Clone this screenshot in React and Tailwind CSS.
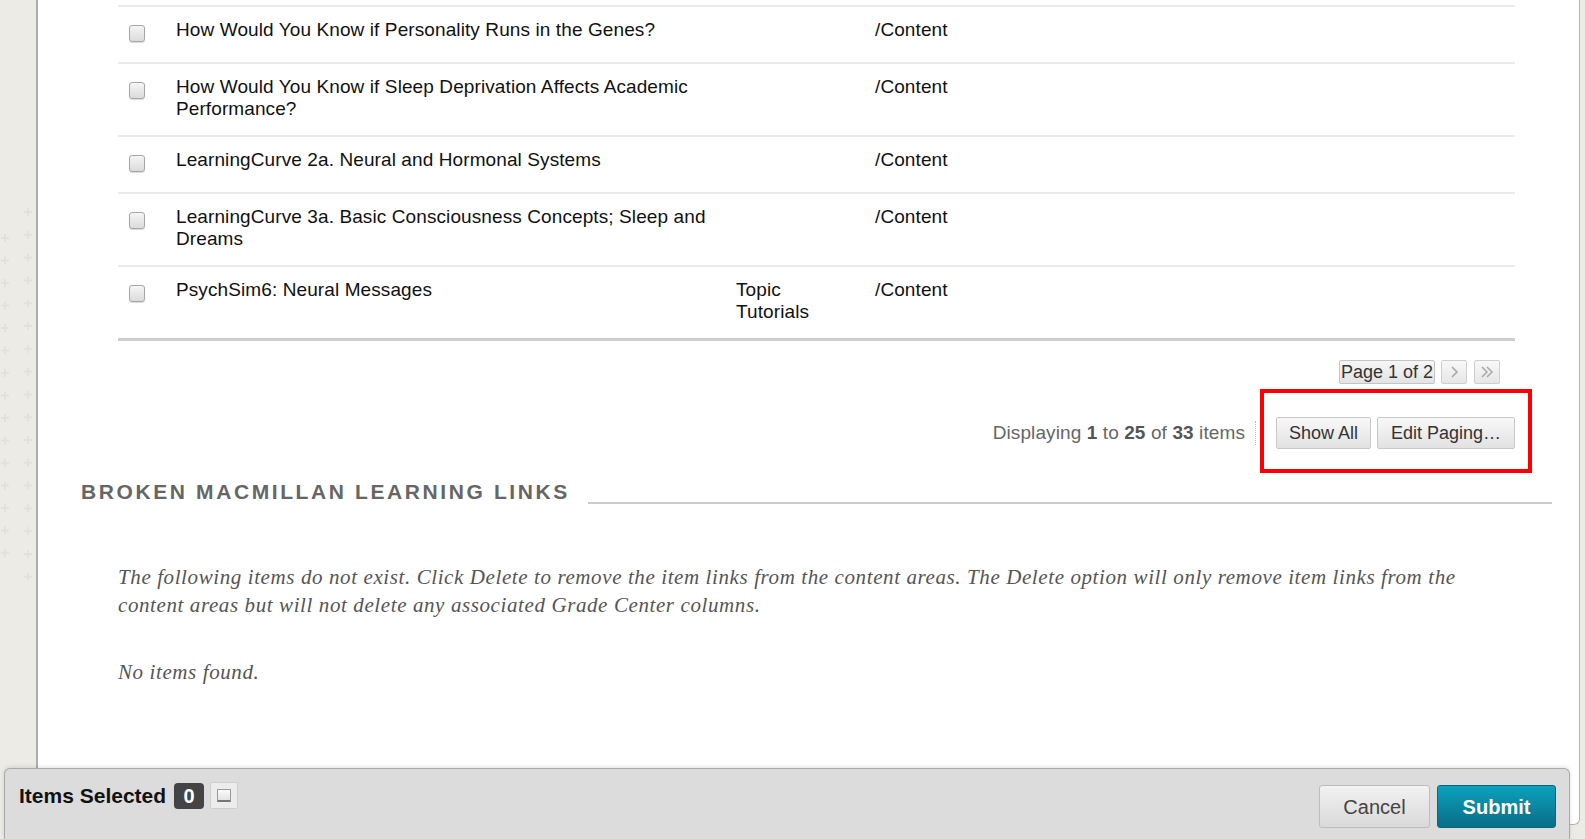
import React from "react";

const rows = [
  { title: "How Would You Know if Personality Runs in the Genes?", type: "", path: "/Content" },
  { title: "How Would You Know if Sleep Deprivation Affects Academic Performance?", type: "", path: "/Content" },
  { title: "LearningCurve 2a. Neural and Hormonal Systems", type: "", path: "/Content" },
  { title: "LearningCurve 3a. Basic Consciousness Concepts; Sleep and Dreams", type: "", path: "/Content" },
  { title: "PsychSim6: Neural Messages", type: "Topic Tutorials", path: "/Content" },
];

const crossesRight = Array.from({ length: 17 }, (_, i) => 212 + i * 22.8);
const crossesLeft = Array.from({ length: 15 }, (_, i) => 238 + i * 22.5);

const Cross = ({ x, y }) => (
  <g>
    <rect x={x - 4} y={y - 1} width="8" height="2" />
    <rect x={x - 1} y={y - 4} width="2" height="8" />
  </g>
);

const Checkbox = () => (
  <div className="w-4 h-[17px] rounded-[3px] border border-[#a6a6a6] bg-gradient-to-b from-[#f5f5f5] to-[#dcdcdc] shadow-[0_1px_1px_rgba(0,0,0,0.15)]" />
);

const App = () => {
  return (
    <div className="relative h-[839px] overflow-hidden flex bg-[#edebe6] font-['Liberation_Sans',Arial,sans-serif]">
      {/* left gutter with faint crosses */}
      <div className="w-[36px] shrink-0">
        <svg width="36" height="839" className="fill-[#e3e1da]">
          {crossesRight.map((y) => (
            <Cross key={"r" + y} x={28} y={y} />
          ))}
          {crossesLeft.map((y) => (
            <Cross key={"l" + y} x={5} y={y} />
          ))}
        </svg>
      </div>

      <main className="w-[1544px] shrink-0 h-[825px] bg-white border-l-2 border-r border-b border-l-[#adadad] border-r-[#b5b5b5] border-b-[#b5b5b5] rounded-br-[6px]">
        {/* table */}
        <div className="ml-[80px] mr-[64px] pt-[5px]">
          <div className="border-t-2 border-[#ebebeb] border-b-[3px] border-b-[#cdcdcd]">
            {rows.map((r, i) => (
              <div
                key={i}
                className={
                  "grid grid-cols-[58px_560px_139px_1fr] text-[19px] leading-[22px] tracking-[0.1px] text-[#111] " +
                  (i < rows.length - 1 ? "border-b-2 border-[#ebebeb]" : "")
                }
              >
                <div className="pl-[11px] pt-[18px] pb-[20px]">
                  <Checkbox />
                </div>
                <div className="pt-[12px] pb-[15px] pr-[15px]">{r.title}</div>
                <div className="pt-[12px] pb-[15px] pr-[30px]">{r.type}</div>
                <div className="pt-[12px] pb-[15px]">{r.path}</div>
              </div>
            ))}
          </div>

          {/* pager */}
          <div className="flex justify-end items-center mt-[19px] pr-[15px]">
            <div className="h-[24px] w-[96px] flex items-center justify-center rounded-[2px] border border-[#c4c4c4] bg-gradient-to-b from-[#f6f6f6] to-[#e3e3e3] text-[18px] text-[#333] whitespace-nowrap">
              Page 1 of 2
            </div>
            <div className="ml-[6px] h-[24px] w-[26px] flex items-center justify-center rounded-[2px] border border-[#cfcfcf] bg-gradient-to-b from-[#f8f8f8] to-[#e6e6e6]">
              <svg width="10" height="14" viewBox="0 0 10 14" fill="none" stroke="#a8a8a8" strokeWidth="1.6">
                <path d="M3 2l5 5-5 5" />
              </svg>
            </div>
            <div className="ml-[7px] h-[24px] w-[26px] flex items-center justify-center rounded-[2px] border border-[#cfcfcf] bg-gradient-to-b from-[#f8f8f8] to-[#e6e6e6]">
              <svg width="16" height="14" viewBox="0 0 16 14" fill="none" stroke="#a8a8a8" strokeWidth="1.5">
                <path d="M3 2l5 5-5 5" />
                <path d="M8 2l5 5-5 5" />
              </svg>
            </div>
          </div>

          {/* paging summary */}
          <div className="flex justify-end items-center mt-[33px]">
            <div className="text-[19px] tracking-[0.1px] text-[#666] whitespace-nowrap">
              Displaying <b className="text-[#555]">1</b> to <b className="text-[#555]">25</b> of{" "}
              <b className="text-[#555]">33</b> items
            </div>
            <div className="ml-[10px] h-[24px] border-l border-dotted border-[#bbb]" />
            <div className="relative ml-[20px] flex gap-[6px]">
              <button className="h-[32px] w-[95px] rounded-[2px] border border-[#c8c8c8] bg-gradient-to-b from-[#f8f8f8] to-[#e2e2e2] text-[18px] text-[#333]">
                Show All
              </button>
              <button className="h-[32px] w-[138px] rounded-[2px] border border-[#c8c8c8] bg-gradient-to-b from-[#f8f8f8] to-[#e2e2e2] text-[18px] text-[#333]">
                Edit Paging…
              </button>
              <div className="absolute -left-[16px] -right-[17px] -top-[28px] -bottom-[24px] border-4 border-[#ff0000] pointer-events-none" />
            </div>
          </div>
        </div>

        {/* broken links section */}
        <div className="ml-[43px] mr-[27px] mt-[31px] flex items-end">
          <h2 className="text-[21px] leading-[24px] font-bold tracking-[2.6px] text-[#666] whitespace-nowrap">
            BROKEN MACMILLAN LEARNING LINKS
          </h2>
          <div className="flex-1 ml-[18px] border-b-2 border-[#cccccc]" />
        </div>

        <div className="ml-[80px] mr-[80px] font-['Liberation_Serif',Georgia,serif] italic text-[#555] text-[21px] leading-[28px] tracking-[0.6px]">
          <p className="mt-[59px]">
            The following items do not exist. Click Delete to remove the item links from the content areas. The Delete
            option will only remove item links from the content areas but will not delete any associated Grade Center
            columns.
          </p>
          <p className="mt-[39px]">No items found.</p>
        </div>
      </main>

      {/* selection bar */}
      <div className="absolute left-[4px] right-[15px] top-[768px] bottom-0 rounded-t-[6px] border border-b-0 border-[#a9a9a9] bg-[#dcdcdc] shadow-[0_-1px_4px_rgba(0,0,0,0.12)] flex justify-between">
        <div className="flex items-center h-[27px] mt-[13px] pl-[14px]">
          <span className="text-[21px] font-bold text-[#111]">Items Selected</span>
          <span className="ml-[8px] h-[26px] w-[30px] rounded-[4px] bg-[#444] text-white text-[20px] font-bold flex items-center justify-center">
            0
          </span>
          <span className="ml-[6px] h-[27px] w-[28px] rounded-[2px] border border-[#cfcfcf] bg-[#ececec] flex items-center justify-center">
            <span className="w-[14px] h-[13px] border border-[#9a9a9a] border-b-2 border-b-[#777] bg-gradient-to-b from-[#fafafa] to-[#e4e4e4]" />
          </span>
        </div>
        <div className="flex gap-[7px] mt-[16px] pr-[13px]">
          <button className="h-[43px] w-[111px] rounded-[3px] border border-[#bdbdbd] bg-gradient-to-b from-[#f2f2f2] to-[#d9d9d9] text-[20px] text-[#444]">
            Cancel
          </button>
          <button className="h-[43px] w-[119px] rounded-[3px] border border-[#08687d] bg-gradient-to-b from-[#0aa2bd] to-[#0a6d87] text-[20px] font-bold text-white">
            Submit
          </button>
        </div>
      </div>
    </div>
  );
};

export default App;
